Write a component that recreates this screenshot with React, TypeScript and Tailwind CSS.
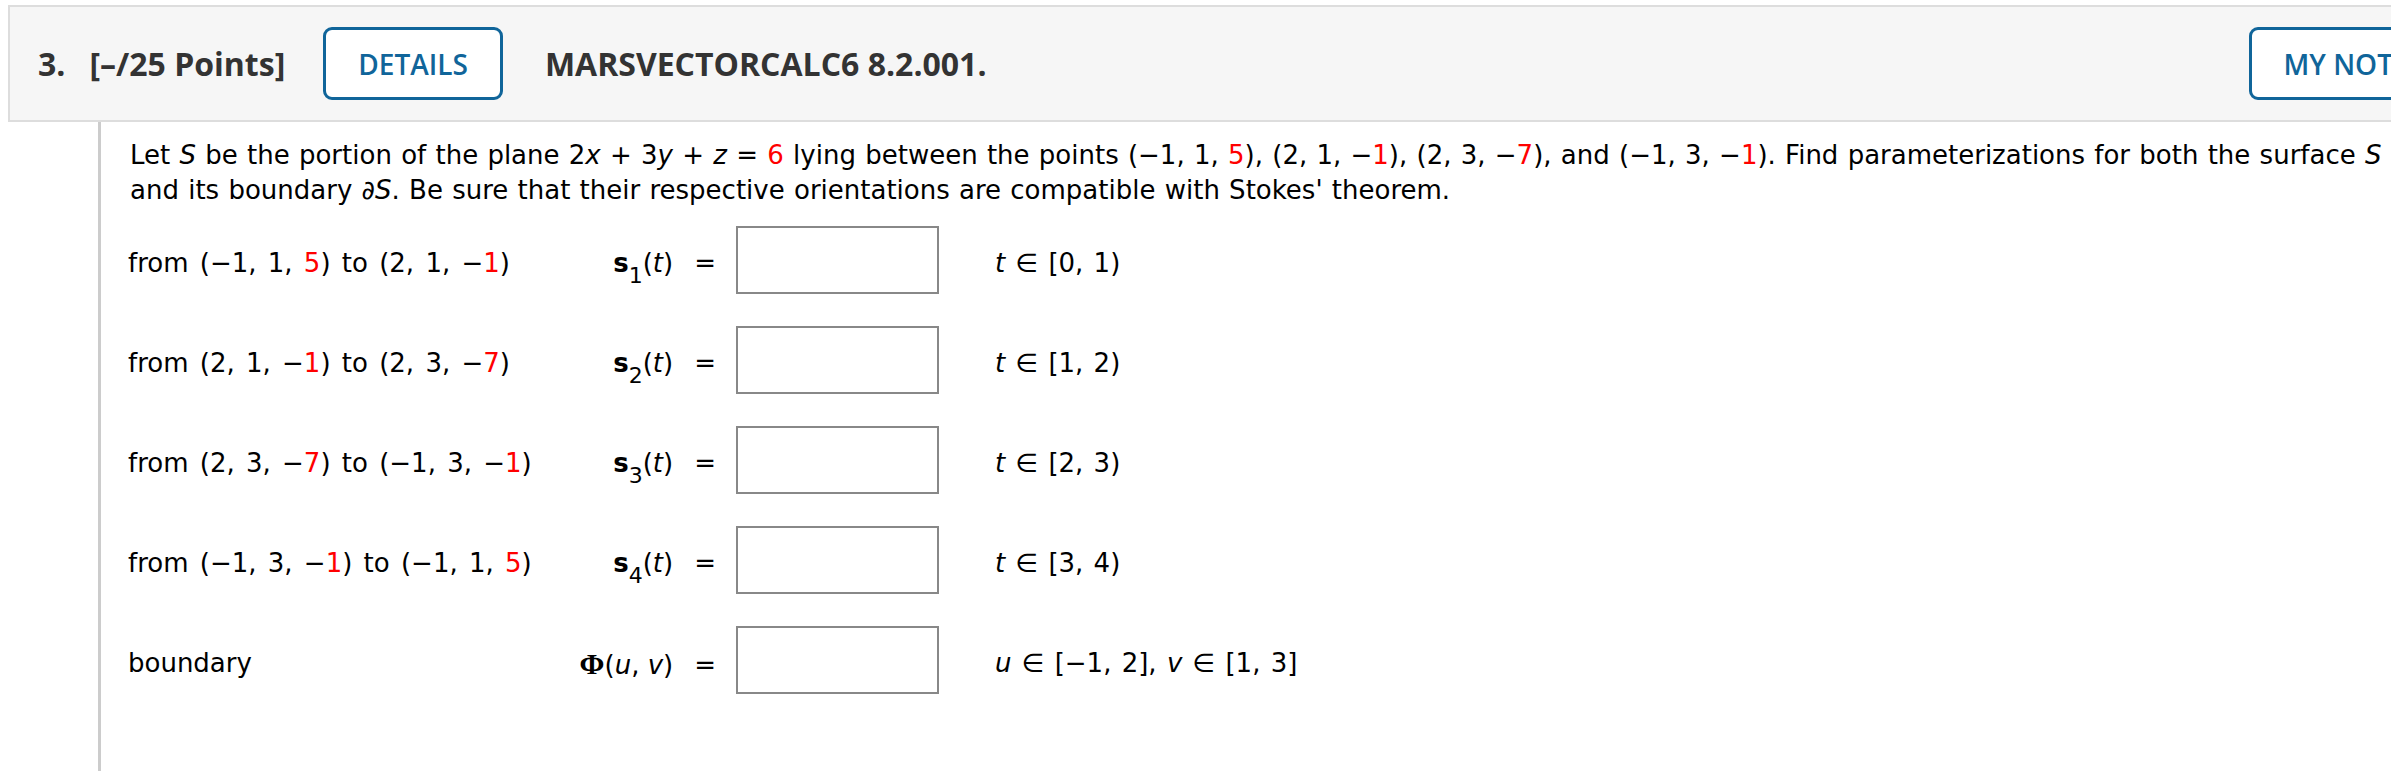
import React from 'react';

const Red = ({ children }: { children: React.ReactNode }) => (
  <span className="text-[#ff0000]">{children}</span>
);

const Vec = ({ n }: { n: string }) => (
  <>
    <span className="font-bold">s</span>
    <sub className="text-[22px] -bottom-[11px]">{n}</sub>
    (<i>t</i>)
  </>
);

const Row = ({ label, fn, range }: { label: React.ReactNode; fn: React.ReactNode; range: React.ReactNode }) => (
  <div className="flex items-center h-[68px]">
    <div className="w-[448px] -ml-[2px] whitespace-nowrap pt-[6px] [word-spacing:3px]">{label}</div>
    <div className="w-[140px] text-right whitespace-nowrap pt-[6px]">
      {fn}
      <span className="ml-[21px]">=</span>
    </div>
    <div className="ml-[20px] w-[203px] h-[68px] border-2 border-[#888888] bg-white" />
    <div className="ml-[56px] whitespace-nowrap pt-[6px] [word-spacing:2px]">{range}</div>
  </div>
);

export default function App() {
  return (
    <div className="w-[2391px] h-[771px] overflow-hidden bg-white flex flex-col">
      <header
        className="ml-[8px] mt-[5px] h-[117px] w-[2483px] shrink-0 flex items-center bg-[#f6f6f6] border-2 border-r-0 border-[#dddddd] pl-[28px] pr-[32px] text-[#333333]"
        style={{ fontFamily: '"Open Sans", sans-serif' }}
      >
        <span className="text-[32px] font-bold">3.</span>
        <span className="ml-[24px] text-[32px] font-bold">[–/25 Points]</span>
        <button className="ml-[38px] h-[73px] px-[32px] rounded-[9px] border-[3px] border-[#10659a] text-[#10659a] text-[28px] font-semibold bg-white">
          DETAILS
        </button>
        <span className="ml-[42px] text-[32px] font-bold">MARSVECTORCALC6 8.2.001.</span>
        <div className="flex-1" />
        <button className="h-[73px] px-[32px] rounded-[9px] border-[3px] border-[#10659a] text-[#10659a] text-[28px] font-semibold bg-white whitespace-nowrap">
          MY NOTES
        </button>
      </header>

      <div
        className="flex-1 ml-[98px] border-l-[3px] border-[#cccccc] pl-[29px] pt-[16px] text-black text-[26px]"
        style={{ fontFamily: '"DejaVu Sans", Verdana, sans-serif' }}
      >
        <p className="leading-[35px] whitespace-nowrap [word-spacing:1px]">
          Let <i>S</i> be the portion of the plane 2<i>x</i> + 3<i>y</i> + <i>z</i> = <Red>6</Red> lying between the points (−1, 1, <Red>5</Red>), (2, 1, −<Red>1</Red>), (2, 3, −<Red>7</Red>), and (−1, 3, −<Red>1</Red>). Find parameterizations for both the surface <i>S</i>
          <br />
          and its boundary ∂<i>S</i>. Be sure that their respective orientations are compatible with Stokes' theorem.
        </p>

        <div className="mt-[18px] flex flex-col gap-[32px]">
          <Row
            label={<>from (−1, 1, <Red>5</Red>) to (2, 1, −<Red>1</Red>)</>}
            fn={<Vec n="1" />}
            range={<><i>t</i> ∈ [0, 1)</>}
          />
          <Row
            label={<>from (2, 1, −<Red>1</Red>) to (2, 3, −<Red>7</Red>)</>}
            fn={<Vec n="2" />}
            range={<><i>t</i> ∈ [1, 2)</>}
          />
          <Row
            label={<>from (2, 3, −<Red>7</Red>) to (−1, 3, −<Red>1</Red>)</>}
            fn={<Vec n="3" />}
            range={<><i>t</i> ∈ [2, 3)</>}
          />
          <Row
            label={<>from (−1, 3, −<Red>1</Red>) to (−1, 1, <Red>5</Red>)</>}
            fn={<Vec n="4" />}
            range={<><i>t</i> ∈ [3, 4)</>}
          />
          <Row
            label={<>boundary</>}
            fn={
              <>
                <span className="font-bold text-[30px]" style={{ fontFamily: '"Liberation Serif", serif' }}>Φ</span>
                (<i>u</i>, <i>v</i>)
              </>
            }
            range={<><i>u</i> ∈ [−1, 2], <i>v</i> ∈ [1, 3]</>}
          />
        </div>
      </div>
    </div>
  );
}
